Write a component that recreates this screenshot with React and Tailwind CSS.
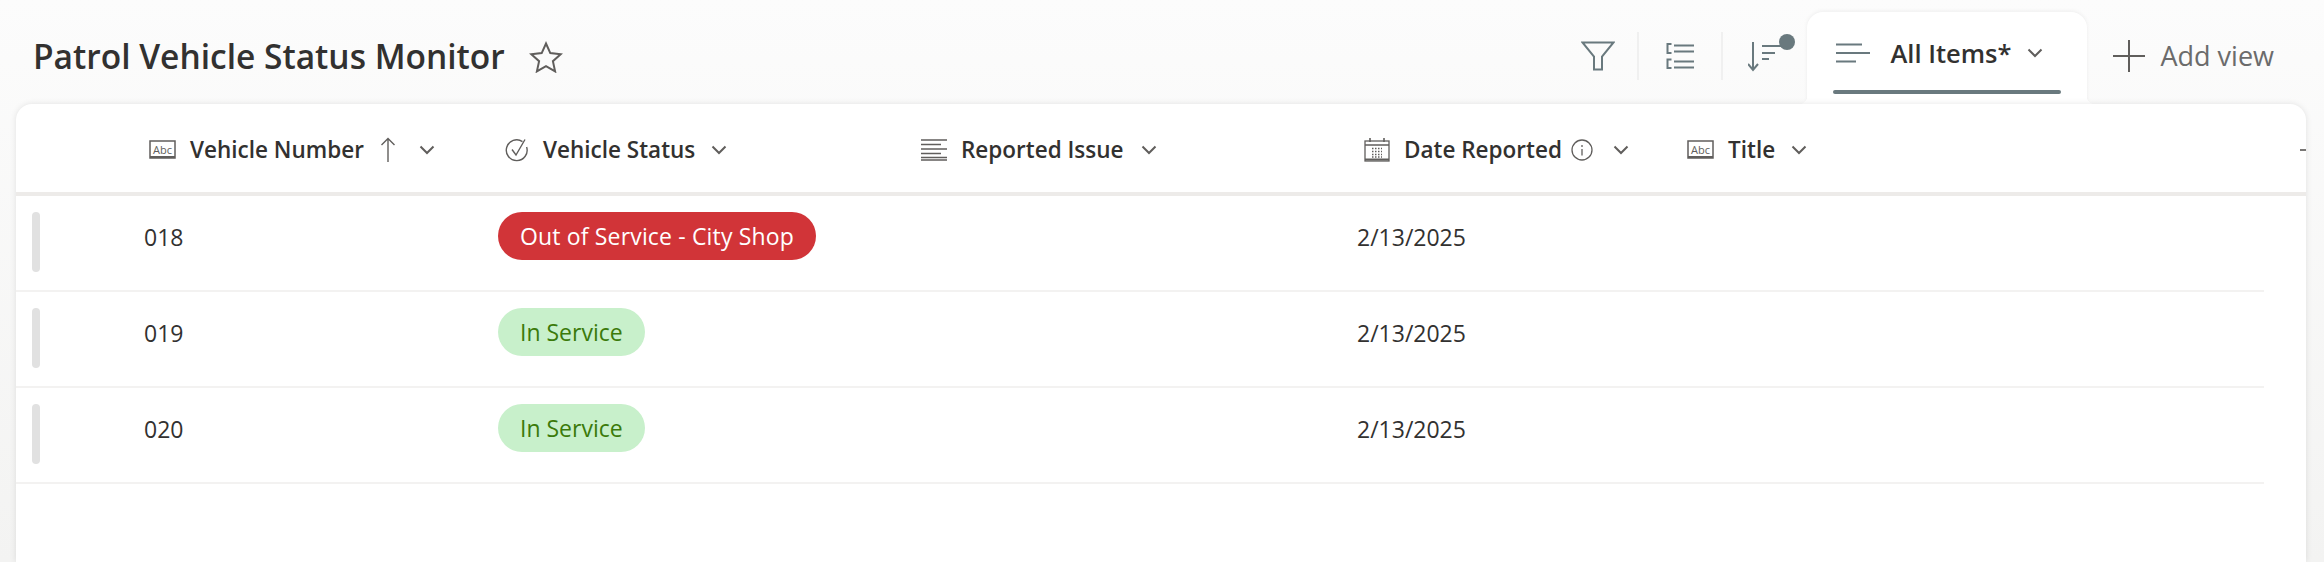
import React from 'react';

const FONT = "font-['Open_Sans','Noto_Sans',sans-serif]";

const Chevron = ({ className = 'text-[#605e5c]' }) => (
  <svg width="16" height="10" viewBox="0 0 16 10" fill="none" stroke="currentColor" strokeWidth="2" className={className}>
    <path d="M1.5 1.5 8 8l6.5-6.5" />
  </svg>
);

const AbcIcon = () => (
  <svg width="27" height="19" viewBox="0 0 27 19" className="text-[#605e5c]">
    <rect x="1" y="1" width="25" height="17" fill="none" stroke="currentColor" strokeWidth="1.5" />
    <rect x="1" y="16" width="25" height="2" fill="currentColor" />
    <text x="13.5" y="13.5" textAnchor="middle" fontSize="11" fill="currentColor" fontFamily="Open Sans">Abc</text>
  </svg>
);

const ChoiceIcon = () => (
  <svg width="24" height="24" viewBox="0 0 24 24" fill="none" stroke="#605e5c" strokeWidth="1.4">
    <path d="M17.5 3.6A10.4 10.4 0 1 0 21.6 9" />
    <path d="M7 11.5l4 5.5L20 1.5" />
  </svg>
);

const NoteIcon = () => (
  <svg width="26" height="22" viewBox="0 0 26 22" stroke="#605e5c" strokeWidth="1.5">
    <path d="M0 1h26M0 5.5h20M0 10h26M0 14.5h20M0 18.5h26M0 21h26" />
  </svg>
);

const CalendarIcon = () => (
  <svg width="26" height="24" viewBox="0 0 26 24" fill="none" stroke="#605e5c" strokeWidth="1.3">
    <rect x="1" y="3" width="24" height="20" />
    <path d="M1 7h24M6 0v4M20 0v4" strokeWidth="1.6" />
    <path d="M1 21.5h24" strokeWidth="2" />
    <path d="M8 10.5h10M8 13.5h10M8 16.5h10M8 19h10" strokeDasharray="1.5 1.5" />
  </svg>
);

const HeaderCell = ({ icon, label, info, arrow, chevronGap = 'ml-[2px]', className = '' }) => (
  <div className={`flex items-center gap-[14px] ${className}`}>
    {icon}
    <span className="flex items-center text-[22.5px] font-semibold text-[#323130] whitespace-nowrap">{label}</span>
    {info && (
      <svg width="22" height="22" viewBox="0 0 22 22" fill="none" stroke="#605e5c" strokeWidth="1.3" className="-ml-[5px]">
        <circle cx="11" cy="11" r="10" />
        <path d="M11 10v6.5M11 6v2" />
      </svg>
    )}
    {arrow && (
      <svg width="16" height="26" viewBox="0 0 16 26" fill="none" stroke="#605e5c" strokeWidth="1.4" className="ml-[2px]">
        <path d="M8 25V1.5M1.5 8 8 1.5 14.5 8" />
      </svg>
    )}
    <Chevron className={`text-[#605e5c] ${chevronGap}`} />
  </div>
);

const rows = [
  { num: '018', status: 'Out of Service - City Shop', tone: 'bg-[#d13438] text-white tracking-[0.16px]' },
  { num: '019', status: 'In Service', tone: 'bg-[#c8f0cb] text-[#3b7a0a]' },
  { num: '020', status: 'In Service', tone: 'bg-[#c8f0cb] text-[#3b7a0a]' },
];

const gridCols = 'grid grid-cols-[128px_354px_416px_443px_323px_1fr]';

export default function App() {
  return (
    <div className={`${FONT} h-[562px] w-[2324px] overflow-hidden bg-gradient-to-b from-[#fcfcfc] to-[#f3f3f2]`}>
      {/* Top bar */}
      <div className="flex h-[104px] items-start">
        <h1 className="ml-[33px] mt-[33px] text-[33.5px] leading-[46px] font-semibold text-[#323130] whitespace-nowrap">
          Patrol Vehicle Status Monitor
        </h1>
        <svg width="34" height="32" viewBox="0 0 34 32" fill="none" stroke="#605e5c" strokeWidth="2" className="ml-[24px] mt-[41px]">
          <path d="M17 2.5l4.3 9.6 10.4 1.1-7.8 7 2.2 10.2L17 25.2l-9.1 5.2 2.2-10.2-7.8-7 10.4-1.1z" />
        </svg>

        <div className="ml-auto mt-[32px] flex h-[48px] w-[84px] items-center justify-center border-r-2 border-[#f0f0f0] pl-[3px]">
          <svg width="34" height="30" viewBox="0 0 34 30" fill="none" stroke="#69797e" strokeWidth="2">
            <path d="M1.5 1.5h31L21 15.5v13h-8v-13z" />
          </svg>
        </div>
        <div className="mt-[32px] flex h-[48px] w-[84px] items-center justify-center border-r-2 border-[#f0f0f0]">
          <svg width="30" height="28" viewBox="0 0 30 28" fill="none" stroke="#69797e" strokeWidth="2">
            <path d="M6.5 2H2.5v9h4M6.5 17.500H2.500v8.500h4" />
            <path d="M9 3.500h20M9 9.500h20M9 19.500h20M9 25.500h20" />
          </svg>
        </div>
        <div className="mt-[32px] flex h-[48px] w-[84px] items-start pl-[25px] pt-[2px]">
          <div className="relative h-[40px] w-[48px]">
            <svg width="36" height="30" viewBox="0 0 36 30" fill="none" stroke="#69797e" strokeWidth="2" className="absolute left-0 top-[8px]">
              <path d="M5 0v27M0 22l5 6 5-6" />
              <path d="M14 4h20M14 11h13M14 17h7" />
            </svg>
            <span className="absolute left-[31px] top-0 h-[16px] w-[16px] rounded-full bg-[#69797e]" />
          </div>
        </div>

        {/* Active view tab */}
        <div className="relative mt-[12px] flex h-[92px] w-[280px] flex-col rounded-t-[16px] bg-white shadow-[0_-1px_4px_rgba(0,0,0,0.06)]">
          <span className="absolute -left-[8px] bottom-0 h-[8px] w-[8px] bg-[radial-gradient(circle_at_0_0,transparent_8px,#ffffff_8.5px)]" />
          <span className="absolute -right-[8px] bottom-0 h-[8px] w-[8px] bg-[radial-gradient(circle_at_100%_0,transparent_8px,#ffffff_8.5px)]" />
          <div className="flex h-[78px] items-center pl-[29px] pt-[4px]">
            <svg width="34" height="20" viewBox="0 0 34 20" stroke="#69797e" strokeWidth="2">
              <path d="M0 1.5h26M0 10h34M0 18.5h20" />
            </svg>
            <span className="ml-[20px] text-[25.5px] font-semibold text-[#323130] whitespace-nowrap">All Items*</span>
            <Chevron className="ml-[16px] text-[#605e5c]" />
          </div>
          <div className="mx-[26px] h-[4px] rounded-full bg-[#69797e]" />
        </div>

        <div className="ml-[26px] mr-[50px] mt-[40px] flex h-[32px] items-center gap-[15px]">
          <svg width="32" height="32" viewBox="0 0 32 32" stroke="#605e5c" strokeWidth="2">
            <path d="M16 0v32M0 16h32" />
          </svg>
          <span className="text-[27px] text-[#6b6b6b] whitespace-nowrap">Add view</span>
        </div>
      </div>

      {/* List card */}
      <div className="relative ml-[16px] h-[458px] w-[2290px] overflow-hidden rounded-t-[16px] bg-white shadow-[0_0_6px_rgba(0,0,0,0.1)]">
        <span className="absolute right-0 top-[45px] h-[2px] w-[6px] bg-[#797775]" />
        <div className={`${gridCols} h-[92px] items-center border-b-4 border-[#edebe9] pt-[3px]`}>
          <div />
          <HeaderCell icon={<AbcIcon />} label="Vehicle Number" arrow chevronGap="ml-[9px]" className="pl-[5px]" />
          <HeaderCell icon={<ChoiceIcon />} label="Vehicle Status" className="pl-[7px]" />
          <HeaderCell icon={<NoteIcon />} label="Reported Issue" chevronGap="ml-[3px]" className="pl-[7px]" />
          <HeaderCell icon={<CalendarIcon />} label="Date Reported" info chevronGap="ml-[6px]" className="pl-[7px]" />
          <HeaderCell icon={<AbcIcon />} label="Title" className="pl-[7px]" />
        </div>

        {rows.map((row) => (
          <div key={row.num} className={`${gridCols} mr-[42px] h-[96px] items-start border-b-2 border-[#f3f2f1]`}>
            <div className="pl-[16px] pt-[16px]">
              <div className="h-[60px] w-[8px] rounded-full bg-[#e1e1e1]" />
            </div>
            <div className="pt-[25px] text-[23px] leading-[32px] text-[#323130]">{row.num}</div>
            <div className="pt-[16px]">
              <span className={`inline-flex h-[48px] items-center rounded-[24px] px-[22px] text-[23px] whitespace-nowrap ${row.tone}`}>
                {row.status}
              </span>
            </div>
            <div />
            <div className="pt-[25px] text-[23px] leading-[32px] text-[#323130]">2/13/2025</div>
            <div />
          </div>
        ))}
      </div>
    </div>
  );
}
